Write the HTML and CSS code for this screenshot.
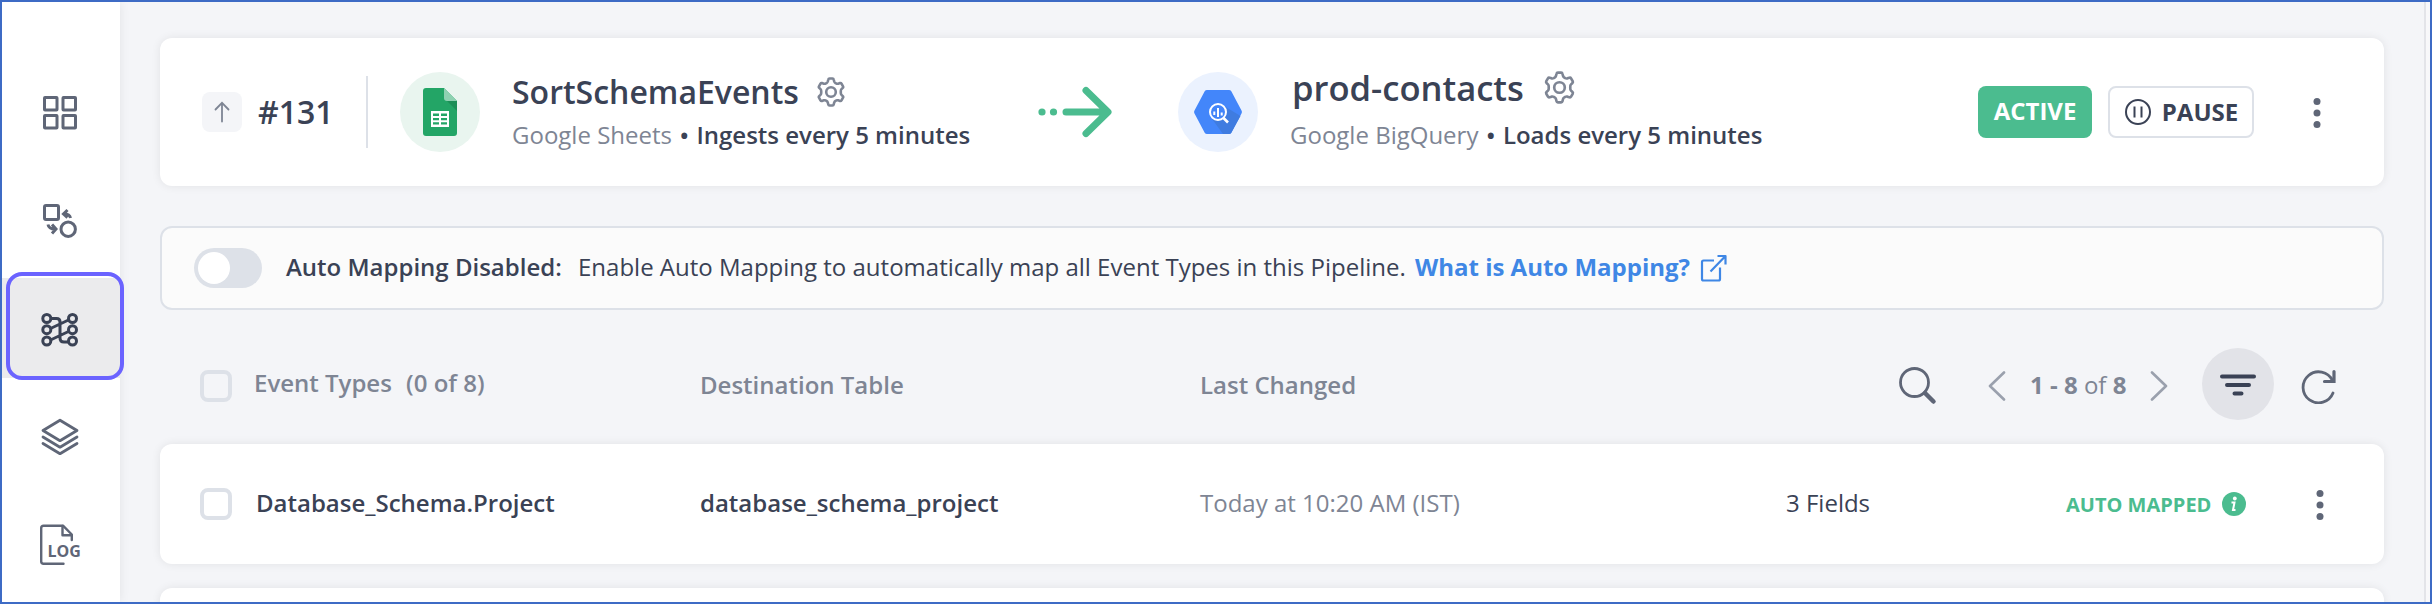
FILE: index.html
```html
<!DOCTYPE html>
<html lang="en">

<head>
    <meta charset="UTF-8" />
    <meta name="viewport" content="width=device-width, initial-scale=1.0" />
    <title>Pipeline - Schema Mapper</title>
    <link rel="stylesheet" href="styles.css">
</head>

<body>
    <div class="app">

        <!-- sidebar -->
        <nav class="sidebar">
            <a class="nav-item">
                <svg width="34" height="34" viewBox="0 0 34 34" fill="none" stroke="#5f6677" stroke-width="3">
                    <rect x="1.5" y="1.5" width="12.5" height="12.5" rx=".5" />
                    <rect x="20" y="1.5" width="12.5" height="12.5" rx=".5" />
                    <rect x="1.5" y="19.5" width="12.5" height="12.5" rx=".5" />
                    <rect x="20" y="19.5" width="12.5" height="12.5" rx=".5" />
                </svg>
            </a>
            <a class="nav-item">
                <svg width="34" height="34" viewBox="0 0 34 34" fill="none" stroke="#5f6677" stroke-width="3">
                    <rect x="1.5" y="1.5" width="14" height="14" rx="1.5" />
                    <circle cx="25.2" cy="25.2" r="7.2" />
                    <path d="M27.5 14c-.5-2.500-2-4-6.500-4M24.500 6l-4 4 4 3.500" />
                    <path d="M5 20.500c.5 2.800 2 4.500 7 4.500M9 20.500l4 4.500-4 4.500" />
                </svg>
            </a>
            <a class="nav-item active">
                <svg width="38" height="34" viewBox="0 0 38 34" fill="none" stroke="#3a4255" stroke-width="3">
                    <circle cx="5.800" cy="5.500" r="4" />
                    <circle cx="5.800" cy="16.700" r="4" />
                    <circle cx="5.800" cy="28" r="4" />
                    <circle cx="31.500" cy="5.500" r="4" />
                    <circle cx="31.500" cy="16.700" r="4" />
                    <circle cx="31.500" cy="28" r="4" />
                    <path d="M10 5.500h5.500q3.500 0 3.500 3.500v16q0 4 4 4h4.500M9.500 15.500l18-8.500M9.500 27l18-8.500" />
                </svg>
            </a>
            <a class="nav-item">
                <svg width="38" height="38" viewBox="0 0 38 38" fill="none" stroke="#5f6677" stroke-width="2.800" stroke-linejoin="round" stroke-linecap="round">
                    <path d="M19 2.200L36 12.500 19 22.700 2 12.500z" />
                    <path d="M2 19l17 10.200L36 19" />
                    <path d="M2 25.500l17 10.200 17-10.200" />
                </svg>
            </a>
            <a class="nav-item nav-log">
                <svg width="42" height="42" viewBox="0 0 42 42" fill="none" stroke="#5f6677" stroke-width="2.400" stroke-linecap="round" stroke-linejoin="round">
                    <path d="M24.500 39.800H4.500q-2.300 0-2.300-2.300V4q0-2.300 2.300-2.300H24l8.800 8.800v5.500" />
                    <path d="M23.500 2v9.300h9" />
                    <text class="log-text" x="8.500" y="32.500">LOG</text>
                </svg>
            </a>
        </nav>

        <main class="content">

            <!-- pipeline summary -->
            <section class="card pipeline">
                <div class="up-btn">
                    <svg width="16" height="22" viewBox="0 0 16 22" fill="none" stroke="#7e8594" stroke-width="1.800" stroke-linecap="round">
                        <path d="M8 20.500V2M1.500 8.500L8 1.800l6.500 6.700" />
                    </svg>
                </div>
                <div class="pipeline-id">#131</div>
                <div class="divider"></div>

                <div class="endpoint source">
                    <div class="logo sheets">
                        <svg width="34" height="48" viewBox="0 0 34 48">
                            <path fill="#23a566" d="M3 0h18l13 13v32q0 3-3 3H3q-3 0-3-3V3q0-3 3-3z" />
                            <path fill="#8ed1b1" d="M21 0l13 13H24q-3 0-3-3z" />
                            <path fill="#1c8f57" d="M24 13h10v10z" />
                            <path fill="#fff" d="M8 23h18v16H8z" />
                            <path fill="#23a566" d="M10 25.500h6v2.500h-6zM18 25.500h6v2.500h-6zM10 30h6v2.300h-6zM18 30h6v2.300h-6zM10 34.300h6v2.300h-6zM18 34.300h6v2.300h-6z" />
                        </svg>
                    </div>
                    <div class="endpoint-info">
                        <div class="endpoint-title">
                            <span class="source-name">SortSchemaEvents</span>
                            <svg class="gear" width="28" height="30" viewBox="0 0 28 30" fill="none" stroke="#7e8594" stroke-width="2.600" stroke-linejoin="round">
                                <path d="M12.500 1.500h3q1 0 1.200 1l.5 2q.3 1 1.200 1.500l.8.500q1 .5 2 .2l1.800-.6q1-.3 1.500.6l1.500 2.600q.5.900-.2 1.600l-1.300 1.300q-.7.700-.7 1.700v2.200q0 1 .7 1.700l1.300 1.300q.7.700.2 1.600l-1.500 2.600q-.5.900-1.500.6l-1.800-.6q-1-.3-2 .2l-.8.500q-.9.500-1.200 1.500l-.5 2q-.2 1-1.200 1h-3q-1 0-1.200-1l-.5-2q-.3-1-1.200-1.500l-.8-.5q-1-.5-2-.2l-1.800.6q-1 .3-1.500-.6L2 20.700q-.5-.9.200-1.600l1.300-1.300q.7-.7.700-1.700v-2.200q0-1-.7-1.700l-1.300-1.300Q1.500 10.200 2 9.300l1.500-2.600q.5-.9 1.500-.6l1.800.6q1 .3 2-.2l.8-.5q.9-.5 1.200-1.500l.5-2q.2-1 1.200-1z" />
                                <circle cx="14" cy="15" r="4.800" />
                            </svg>
                        </div>
                        <div class="endpoint-sub">Google Sheets <b class="dot">•</b> <b>Ingests every 5 minutes</b></div>
                    </div>
                </div>

                <svg class="flow-arrow" width="74" height="52" viewBox="0 0 74 52" fill="none" stroke="#4bbc8f" stroke-width="7" stroke-linecap="round" stroke-linejoin="round">
                    <path d="M28 26h41M48 4.500L70 26 48 47.500" />
                    <g fill="#4bbc8f" stroke="none">
                        <circle cx="4" cy="26" r="3.600" />
                        <circle cx="15.500" cy="26" r="3.600" />
                    </g>
                </svg>

                <div class="endpoint dest">
                    <div class="logo bigquery">
                        <svg width="48" height="44" viewBox="0 0 48 44">
                            <path fill="#4386fa" d="M13 0h22q1.500 0 2.300 1.300L47.500 20.500q.8 1.500 0 3L37.300 42.700Q36.500 44 35 44H13q-1.500 0-2.300-1.300L.5 23.500q-.8-1.500 0-3L10.700 1.300Q11.500 0 13 0z" />
                            <path fill="#3f7ce0" d="M30 16l16.500 10-9.200 16.700Q36.500 44 35 44h-6L18.500 29.500z" />
                            <g fill="none" stroke="#fff">
                                <circle cx="24" cy="22" r="8" stroke-width="2" fill="#4386fa" />
                                <path d="M29.500 28l4.500 4.500" stroke-width="2.600" />
                                <path d="M20.300 21.500v3.500M24 18v9M27.700 22.500v3" stroke-width="2" />
                            </g>
                        </svg>
                    </div>
                    <div class="endpoint-info">
                        <div class="endpoint-title dest-title">
                            <span class="dest-name">prod-contacts</span>
                            <svg class="gear" width="31" height="33" viewBox="0 0 28 30" fill="none" stroke="#7e8594" stroke-width="2.400" stroke-linejoin="round">
                                <path d="M12.500 1.500h3q1 0 1.200 1l.5 2q.3 1 1.200 1.500l.8.500q1 .5 2 .2l1.800-.6q1-.3 1.500.6l1.500 2.600q.5.900-.2 1.600l-1.300 1.300q-.7.700-.7 1.700v2.200q0 1 .7 1.700l1.300 1.300q.7.700.2 1.600l-1.500 2.600q-.5.900-1.500.6l-1.800-.6q-1-.3-2 .2l-.8.500q-.9.500-1.200 1.500l-.5 2q-.2 1-1.200 1h-3q-1 0-1.200-1l-.5-2q-.3-1-1.200-1.500l-.8-.5q-1-.5-2-.2l-1.800.6q-1 .3-1.500-.6L2 20.700q-.5-.9.200-1.600l1.300-1.300q.7-.7.700-1.700v-2.200q0-1-.7-1.700l-1.300-1.300Q1.500 10.200 2 9.300l1.500-2.600q.5-.9 1.500-.6l1.800.6q1 .3 2-.2l.8-.5q.9-.5 1.200-1.500l.5-2q.2-1 1.200-1z" />
                                <circle cx="14" cy="15" r="4.800" />
                            </svg>
                        </div>
                        <div class="endpoint-sub">Google BigQuery <b class="dot">•</b> <b>Loads every 5 minutes</b></div>
                    </div>
                </div>

                <div class="actions">
                    <span class="status">ACTIVE</span>
                    <button class="pause-btn">
                        <svg width="28" height="28" viewBox="0 0 28 28" fill="none" stroke="#3a4255" stroke-width="2">
                            <circle cx="14" cy="14" r="12" />
                            <path d="M10.500 8.500v11M17.500 8.500v11" />
                        </svg>
                        <span>PAUSE</span>
                    </button>
                    <svg class="kebab" width="8" height="32" viewBox="0 0 8 32" fill="#5f6677">
                        <circle cx="4" cy="5.500" r="3.500" />
                        <circle cx="4" cy="17" r="3.500" />
                        <circle cx="4" cy="28.500" r="3.500" />
                    </svg>
                </div>
            </section>

            <!-- auto mapping banner -->
            <section class="banner">
                <div class="toggle"><div class="knob"></div></div>
                <span class="banner-label">Auto Mapping Disabled:</span>
                <span class="banner-text">Enable Auto Mapping to automatically map all Event Types in this Pipeline.</span>
                <a class="banner-link">What is Auto Mapping?</a>
                <svg width="28" height="28" viewBox="0 0 28 28" fill="none" stroke="#3f87e5" stroke-width="2.200" stroke-linejoin="round">
                    <path d="M14 6.500H3.500Q2 6.500 2 8v17q0 1.500 1.500 1.500h15q1.500 0 1.500-1.500V13.500M10.500 17.500L25 2.500M17.500 2H25.500V10.500" />
                </svg>
            </section>

            <!-- table header -->
            <section class="table-head">
                <div class="checkbox"></div>
                <div class="col-event">Event Types <span class="count">(0 of 8)</span></div>
                <div class="col-dest">Destination Table</div>
                <div class="col-changed">Last Changed</div>
                <div class="tools">
                    <svg class="search" width="38" height="38" viewBox="0 0 38 38" fill="none" stroke="#5f6677" stroke-linecap="round">
                        <circle cx="15.500" cy="15.500" r="14" stroke-width="2.800" />
                        <path d="M26 26l8.500 8.500" stroke-width="4.500" />
                    </svg>
                    <svg class="prev" width="18" height="30" viewBox="0 0 18 30" fill="none" stroke="#9aa0ad" stroke-width="2.600" stroke-linecap="round" stroke-linejoin="round">
                        <path d="M16 1.500L2 15l14 13.500" />
                    </svg>
                    <div class="range"><b>1 - 8</b> of <b>8</b></div>
                    <svg class="next" width="18" height="30" viewBox="0 0 18 30" fill="none" stroke="#9aa0ad" stroke-width="2.600" stroke-linecap="round" stroke-linejoin="round">
                        <path d="M2 1.500L16 15 2 28.500" />
                    </svg>
                    <div class="filter-btn">
                        <svg width="36" height="22" viewBox="0 0 36 22" fill="none" stroke="#3a4255" stroke-width="4" stroke-linecap="round">
                            <path d="M2 2.500h32M7 11h22M14.500 19.500h7" />
                        </svg>
                    </div>
                    <svg class="refresh" width="36" height="36" viewBox="0 0 36 36" fill="none" stroke="#5f6677" stroke-width="2.800" stroke-linecap="round">
                        <path d="M32 25A15.500 15.500 0 1 1 31.500 12.500" />
                        <path d="M33 3.500v10h-9.500" stroke-width="3.200" />
                    </svg>
                </div>
            </section>

            <!-- table rows -->
            <section class="card row">
                <div class="checkbox"></div>
                <div class="row-event">Database_Schema.Project</div>
                <div class="row-dest">database_schema_project</div>
                <div class="row-changed">Today at 10:20 AM (IST)</div>
                <div class="row-fields">3 Fields</div>
                <div class="row-mapped">AUTO MAPPED</div>
                <svg class="info" width="24" height="24" viewBox="0 0 24 24">
                    <circle cx="12" cy="12" r="12" fill="#4bbc8f" />
                    <circle cx="12.800" cy="6.500" r="1.900" fill="#fff" />
                    <path d="M9.500 10.500h3l-1.500 7.500h2.500" fill="none" stroke="#fff" stroke-width="2" />
                </svg>
                <svg class="kebab" width="8" height="32" viewBox="0 0 8 32" fill="#5f6677">
                    <circle cx="4" cy="5.500" r="3.500" />
                    <circle cx="4" cy="17" r="3.500" />
                    <circle cx="4" cy="28.500" r="3.500" />
                </svg>
            </section>
            <section class="card row next-row"></section>
        </main>

        <div class="scrollbar"></div>
    </div>
</body>

</html>
```

FILE: styles.css
```css
/*  Page */

* {
    box-sizing: border-box;
}

body {
    margin: 0;
    font-family: "Open Sans", sans-serif;
    font-size: 24px;
    color: #3a4255;
    background-color: #f4f5f8;
}

svg {
    display: block;
    flex: none;
}

.app {
    display: flex;
    width: 2432px;
    height: 604px;
    border: 2px solid #3d6bc5;
    overflow: hidden;
}

/*  Sidebar */

.sidebar {
    width: 118px;
    height: 600px;
    padding-top: 60px;
    background-color: #fff;
    box-shadow: 0 0 10px rgba(0, 0, 0, 0.08);
    flex: none;
}

.nav-item {
    display: flex;
    align-items: center;
    justify-content: center;
    height: 100px;
    margin-bottom: 8px;
    padding: 1px 2px 0 0;
}

.nav-item.active {
    position: relative;
    padding-top: 3px;
    background-color: #ebebed;
}

.nav-item.active::after {
    content: "";
    position: absolute;
    top: -6px;
    left: 4px;
    width: 118px;
    height: 108px;
    box-sizing: border-box;
    border: 4px solid #6b63ff;
    border-radius: 16px;
}

.log-text {
    font-size: 16px;
    font-weight: 700;
    fill: #5f6677;
    stroke: none;
}

/*  Main area */

.content {
    width: 2224px;
    margin-left: 40px;
    padding-top: 36px;
    flex: none;
}

.card {
    display: flex;
    align-items: center;
    background-color: #fff;
    border-radius: 12px;
    box-shadow: 0 0 10px rgba(0, 0, 0, 0.08);
}

.pipeline {
    height: 148px;
    padding-left: 42px;
}

.up-btn {
    display: flex;
    align-items: center;
    justify-content: center;
    width: 40px;
    height: 40px;
    border-radius: 8px;
    background-color: #f4f5f8;
}

.pipeline-id {
    width: 108px;
    margin-left: 16px;
    padding-bottom: 2px;
    font-size: 32px;
    font-weight: 600;
}

.divider {
    width: 2px;
    height: 72px;
    background-color: #dde1e8;
}

.endpoint {
    display: flex;
    align-items: center;
    white-space: nowrap;
}

.source {
    width: 638px;
    margin-left: 32px;
}

.logo {
    display: flex;
    align-items: center;
    justify-content: center;
    width: 80px;
    height: 80px;
    border-radius: 50%;
    flex: none;
}

.sheets {
    background-color: #e9f5ef;
}

.bigquery {
    background-color: #ebf2fe;
}

.endpoint-info {
    margin-left: 32px;
}

.endpoint-title {
    display: flex;
    align-items: center;
    height: 40px;
    padding-bottom: 1px;
    font-size: 32px;
    font-weight: 600;
}

.endpoint-title .gear {
    margin-left: 18px;
}

.dest-title {
    padding: 0 0 10px 2px;
    font-size: 34.6px;
}

.dest-title .gear {
    margin-left: 20px;
}

.endpoint-sub {
    height: 40px;
    line-height: 46px;
    color: #7e8594;
}

.endpoint-sub b {
    color: #3a4255;
    font-weight: 600;
}

.endpoint-sub .dot {
    margin: 0 1.5px;
}

.dest {
    margin-left: 66px;
}

.actions {
    display: flex;
    align-items: center;
    margin-left: auto;
    margin-right: 63px;
}

.status {
    width: 114px;
    height: 52px;
    line-height: 50px;
    text-align: center;
    font-weight: 700;
    color: #fff;
    background-color: #4bbc8f;
    border-radius: 8px;
}

.pause-btn {
    display: flex;
    align-items: center;
    justify-content: center;
    gap: 10px;
    width: 146px;
    height: 52px;
    margin: 0 59px 0 16px;
    padding: 0;
    font: inherit;
    font-weight: 700;
    color: #3a4255;
    background-color: #fff;
    border: 2px solid #dde1e8;
    border-radius: 8px;
}

.pause-btn span {
    padding-bottom: 2px;
}

/*  Banner */

.banner {
    display: flex;
    align-items: center;
    height: 84px;
    margin-top: 40px;
    padding-left: 32px;
    background-color: #fbfbfb;
    border: 2px solid #dde1e8;
    border-radius: 12px;
    white-space: nowrap;
}

.toggle {
    width: 68px;
    height: 40px;
    padding: 4px;
    border-radius: 20px;
    background-color: #dde1e8;
}

.knob {
    width: 32px;
    height: 32px;
    border-radius: 50%;
    background-color: #fff;
}

.banner-label,
.banner-text,
.banner-link {
    padding-bottom: 3px;
}

.banner-label {
    width: 292px;
    margin-left: 24px;
    font-weight: 600;
}

.banner-text {
    width: 837px;
}

.banner-link {
    width: 285px;
    font-weight: 700;
    color: #3f87e5;
}

/*  Table */

.checkbox {
    width: 32px;
    height: 32px;
    border: 4px solid #dde1e8;
    border-radius: 8px;
    flex: none;
}

.table-head {
    display: flex;
    align-items: center;
    height: 134px;
    padding: 18px 47px 0 40px;
    font-weight: 600;
    color: #7e8594;
    white-space: nowrap;
}

.col-event {
    width: 446px;
    margin-left: 22px;
    padding-bottom: 7px;
}

.count {
    margin-left: 8px;
}

.col-dest {
    width: 500px;
    padding-bottom: 3px;
}

.col-changed {
    padding-bottom: 3px;
}

.tools {
    display: flex;
    align-items: center;
    margin-left: auto;
}

.prev {
    margin-left: 51px;
}

.range {
    width: 96px;
    margin: 0 24px;
    padding-bottom: 3px;
    font-weight: 400;
    text-align: center;
}

.filter-btn {
    display: flex;
    align-items: center;
    justify-content: center;
    width: 72px;
    height: 72px;
    margin: -4px 27px 0 34px;
    padding-top: 2px;
    border-radius: 50%;
    background-color: #e2e3e8;
}

.row {
    height: 120px;
    padding-left: 40px;
    margin-bottom: 24px;
    white-space: nowrap;
}

.row-event,
.row-dest,
.row-changed,
.row-fields {
    padding-bottom: 3px;
}

.row-event {
    width: 444px;
    margin-left: 24px;
    font-weight: 600;
}

.row-dest {
    width: 500px;
    font-weight: 600;
}

.row-changed {
    width: 586px;
    color: #7e8594;
}

.row-fields {
    width: 280px;
}

.row-mapped {
    width: 156px;
    font-size: 20px;
    font-weight: 700;
    color: #4bbc8f;
}

.row .kebab {
    margin-left: 70px;
}

.scrollbar {
    width: 6px;
    height: 600px;
    margin-left: auto;
    border-left: 2px solid #e3e4e9;
    background-color: #f8f8fa;
}
```
